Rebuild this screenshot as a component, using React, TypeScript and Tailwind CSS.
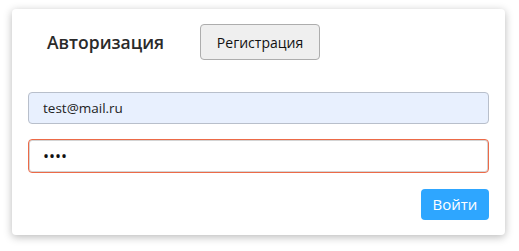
import React from "react";

export default function App() {
  return (
    <div className="min-h-screen bg-white pl-[12px] pt-[9px] font-['Open_Sans',sans-serif]">
      <div className="flex h-[226px] w-[493px] flex-col rounded-[4px] bg-white px-4 pt-[15px] shadow-[0_2px_9px_rgba(0,0,0,0.28)]">
        {/* Tabs */}
        <div className="flex items-center">
          <div className="w-[172px] pl-[19px] text-[17.5px] font-semibold text-[#2a2a2a]">Авторизация</div>
          <button className="h-9 w-[120px] rounded-[4px] border border-[#adadad] bg-[#efefef] text-[14px] text-[#111]">
            Регистрация
          </button>
        </div>

        {/* Fields */}
        <input
          readOnly
          value="test@mail.ru"
          className="mt-8 h-8 w-full rounded-[4px] border border-[#b8bfcb] bg-[#e8f0fe] pl-[14px] text-[13.5px] text-[#222] outline-none"
        />
        <input
          readOnly
          type="password"
          value="1234"
          className="mt-[15px] h-[34px] w-full rounded-[4px] border border-[#ec6a48] bg-white pl-[14px] text-[16px] text-[#111] shadow-[inset_0_0_0_1px_#d4d4d4] outline-none"
        />

        <button className="mt-4 h-[31px] w-[68px] self-end rounded-[4px] bg-[#2ea6ff] text-[15px] text-white">
          Войти
        </button>
      </div>
    </div>
  );
}
